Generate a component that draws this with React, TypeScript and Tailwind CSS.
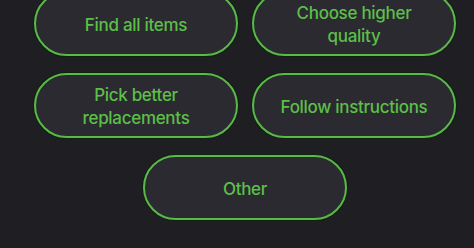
import React from "react";

const options = [
  "Find all items",
  "Choose higher quality",
  "Pick better replacements",
  "Follow instructions",
];

function Pill({ label }: { label: string }) {
  return (
    <button className="flex h-[65px] w-[204px] items-center justify-center rounded-full border-2 border-[#5cb84a] bg-[#2a2a30] px-3 pt-[3px] text-center text-[17px] font-medium leading-[23px] tracking-[-0.3px] text-[#5cbf48] shadow-[0_0_0_1px_#0c240c]">
      {label}
    </button>
  );
}

export default function App() {
  return (
    <div
      className="h-[248px] w-[474px] overflow-hidden bg-[#1e1e23]"
      style={{ fontFamily: "Inter, 'Noto Sans', sans-serif" }}>
      <div className="ml-[34px] mt-[-9px] flex w-[422px] flex-col items-center gap-[17px]">
        <div className="grid grid-cols-2 gap-x-[14px] gap-y-[17px]">
          <Pill label={options[0]} />
          <div className="flex">
            <button className="flex h-[65px] w-[204px] items-center justify-center rounded-full border-2 border-[#5cb84a] bg-[#2a2a30] px-10 pt-[3px] text-center text-[17px] font-medium leading-[23px] tracking-[-0.3px] text-[#5cbf48] shadow-[0_0_0_1px_#0c240c]">
              {options[1]}
            </button>
          </div>
          <Pill label={options[2]} />
          <Pill label={options[3]} />
        </div>
        <Pill label="Other" />
      </div>
    </div>
  );
}
